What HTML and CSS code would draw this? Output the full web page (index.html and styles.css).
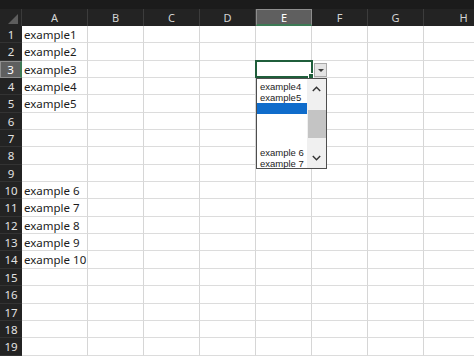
FILE: index.html
```html
<!DOCTYPE html>
<html>
<head>
<meta charset="utf-8">
<link rel="stylesheet" href="styles.css">
</head>
<body>
<div class="sheet">
  <div class="band"></div>
  <div class="grid">
    <div class="corner"><span class="tri"></span></div>
    <div class="ch">A</div><div class="ch">B</div><div class="ch">C</div><div class="ch">D</div><div class="ch ch-sel">E</div><div class="ch">F</div><div class="ch">G</div><div class="ch">H</div>

    <div class="rh">1</div><div class="c">example1</div><div class="c"></div><div class="c"></div><div class="c"></div><div class="c"></div><div class="c"></div><div class="c"></div><div class="c"></div>
    <div class="rh">2</div><div class="c">example2</div><div class="c"></div><div class="c"></div><div class="c"></div><div class="c"></div><div class="c"></div><div class="c"></div><div class="c"></div>
    <div class="rh rh-sel">3</div><div class="c">example3</div><div class="c"></div><div class="c"></div><div class="c"></div><div class="c"></div><div class="c"></div><div class="c"></div><div class="c"></div>
    <div class="rh">4</div><div class="c">example4</div><div class="c"></div><div class="c"></div><div class="c"></div><div class="c"></div><div class="c"></div><div class="c"></div><div class="c"></div>
    <div class="rh">5</div><div class="c">example5</div><div class="c"></div><div class="c"></div><div class="c"></div><div class="c"></div><div class="c"></div><div class="c"></div><div class="c"></div>
    <div class="rh">6</div><div class="c"></div><div class="c"></div><div class="c"></div><div class="c"></div><div class="c"></div><div class="c"></div><div class="c"></div><div class="c"></div>
    <div class="rh">7</div><div class="c"></div><div class="c"></div><div class="c"></div><div class="c"></div><div class="c"></div><div class="c"></div><div class="c"></div><div class="c"></div>
    <div class="rh">8</div><div class="c"></div><div class="c"></div><div class="c"></div><div class="c"></div><div class="c"></div><div class="c"></div><div class="c"></div><div class="c"></div>
    <div class="rh">9</div><div class="c"></div><div class="c"></div><div class="c"></div><div class="c"></div><div class="c"></div><div class="c"></div><div class="c"></div><div class="c"></div>
    <div class="rh">10</div><div class="c">example 6</div><div class="c"></div><div class="c"></div><div class="c"></div><div class="c"></div><div class="c"></div><div class="c"></div><div class="c"></div>
    <div class="rh">11</div><div class="c">example 7</div><div class="c"></div><div class="c"></div><div class="c"></div><div class="c"></div><div class="c"></div><div class="c"></div><div class="c"></div>
    <div class="rh">12</div><div class="c">example 8</div><div class="c"></div><div class="c"></div><div class="c"></div><div class="c"></div><div class="c"></div><div class="c"></div><div class="c"></div>
    <div class="rh">13</div><div class="c">example 9</div><div class="c"></div><div class="c"></div><div class="c"></div><div class="c"></div><div class="c"></div><div class="c"></div><div class="c"></div>
    <div class="rh">14</div><div class="c">example 10</div><div class="c"></div><div class="c"></div><div class="c"></div><div class="c"></div><div class="c"></div><div class="c"></div><div class="c"></div>
    <div class="rh">15</div><div class="c"></div><div class="c"></div><div class="c"></div><div class="c"></div><div class="c"></div><div class="c"></div><div class="c"></div><div class="c"></div>
    <div class="rh">16</div><div class="c"></div><div class="c"></div><div class="c"></div><div class="c"></div><div class="c"></div><div class="c"></div><div class="c"></div><div class="c"></div>
    <div class="rh">17</div><div class="c"></div><div class="c"></div><div class="c"></div><div class="c"></div><div class="c"></div><div class="c"></div><div class="c"></div><div class="c"></div>
    <div class="rh">18</div><div class="c"></div><div class="c"></div><div class="c"></div><div class="c"></div><div class="c"></div><div class="c"></div><div class="c"></div><div class="c"></div>
    <div class="rh">19</div><div class="c"></div><div class="c"></div><div class="c"></div><div class="c"></div><div class="c"></div><div class="c"></div><div class="c"></div><div class="c"></div>
  </div>

  <div class="selection"><span class="handle"></span></div>
  <div class="ddbtn"><span class="ddtri"></span></div>

  <div class="list">
    <div class="items">
      <div class="item">example4</div>
      <div class="item">example5</div>
      <div class="item item-active"></div>
      <div class="item"></div>
      <div class="item"></div>
      <div class="item"></div>
      <div class="item">example 6</div>
      <div class="item">example 7</div>
    </div>
    <div class="scroll">
      <div class="sbtn">
        <svg width="9" height="6" viewBox="0 0 9 6"><polyline points="0.8,5 4.5,1.2 8.2,5" fill="none" stroke="#333" stroke-width="1.4"/></svg>
      </div>
      <div class="track"><div class="thumb"></div></div>
      <div class="sbtn">
        <svg width="9" height="6" viewBox="0 0 9 6"><polyline points="0.8,1 4.5,4.8 8.2,1" fill="none" stroke="#333" stroke-width="1.4"/></svg>
      </div>
    </div>
  </div>
</div>
</body>
</html>
```

FILE: styles.css
```css
html, body {
  margin: 0;
  padding: 0;
  background: #ffffff;
  overflow: hidden;
}

.sheet {
  position: relative;
  width: 474px;
  height: 357px;
  overflow: hidden;
  font-family: "Noto Sans", "Open Sans", sans-serif;
}

.band {
  height: 9px;
  background: #1b1b1b;
}

.grid {
  display: grid;
  grid-template-columns: 22px 66px 56px 56px 56px 56px 56px 56px 80px;
  grid-template-rows: 17px;
  grid-auto-rows: 17.35px;
}

.corner {
  position: relative;
  background: #232323;
  border-right: 1px solid #3a3a3a;
}

.tri {
  position: absolute;
  right: 3px;
  bottom: 2px;
  width: 0;
  height: 0;
  border-left: 10px solid transparent;
  border-bottom: 10px solid #5d5d5d;
}

.ch {
  background: #232323;
  color: #d4d4d4;
  font-size: 11px;
  line-height: 17px;
  text-align: center;
  border-right: 1px solid #3c3c3c;
  box-sizing: border-box;
}

.ch-sel {
  background: #5f5f5f;
  color: #ffffff;
  border: 1px solid #8e8e8e;
  border-bottom: 2px solid #3d7a55;
  line-height: 15px;
}

.rh {
  background: #232323;
  color: #e2e2e2;
  font-size: 11.5px;
  line-height: 17px;
  text-align: center;
  border-bottom: 1px solid #333333;
  box-sizing: border-box;
}

.rh-sel {
  background: #5f5f5f;
  color: #ffffff;
  border: 1px solid #8e8e8e;
  border-right: 2px solid #3d7a55;
  line-height: 15px;
}

.c {
  box-sizing: border-box;
  border-right: 1px solid #d6d6d6;
  border-bottom: 1px solid #dcdcdc;
  font-size: 11.5px;
  line-height: 17px;
  color: #1c1c1c;
  padding-left: 2px;
  white-space: nowrap;
  overflow: visible;
}

.selection {
  position: absolute;
  left: 255px;
  top: 60px;
  width: 58px;
  height: 18px;
  box-sizing: border-box;
  border: 2px solid #1f5e3b;
}

.handle {
  position: absolute;
  right: -3px;
  bottom: -3px;
  width: 4px;
  height: 4px;
  background: #1f5e3b;
  border: 1px solid #ffffff;
}

.ddbtn {
  position: absolute;
  left: 314px;
  top: 63px;
  width: 13px;
  height: 14px;
  box-sizing: border-box;
  background: #e4e4e4;
  border: 1px solid #a9a9a9;
  display: flex;
  align-items: center;
  justify-content: center;
}

.ddtri {
  width: 0;
  height: 0;
  border-left: 3px solid transparent;
  border-right: 3px solid transparent;
  border-top: 3px solid #3e3e3e;
}

.list {
  position: absolute;
  left: 256px;
  top: 78px;
  width: 71px;
  height: 91px;
  box-sizing: border-box;
  background: #ffffff;
  border: 1px solid #4e4e4e;
  display: flex;
}

.items {
  flex: 1;
  padding-top: 1.5px;
}

.item {
  height: 11px;
  font-family: "Liberation Sans", Arial, sans-serif;
  font-size: 9.5px;
  line-height: 11px;
  color: #1c1c1c;
  padding-left: 3px;
  white-space: nowrap;
}

.item-active {
  background: #0f6ccb;
}

.scroll {
  width: 19px;
  background: #f0f0f0;
  display: flex;
  flex-direction: column;
}

.sbtn {
  height: 20px;
  display: flex;
  align-items: center;
  justify-content: center;
}

.track {
  flex: 1;
  padding-top: 11px;
}

.thumb {
  height: 28px;
  margin-left: 1px;
  background: #c4c4c4;
}
```
